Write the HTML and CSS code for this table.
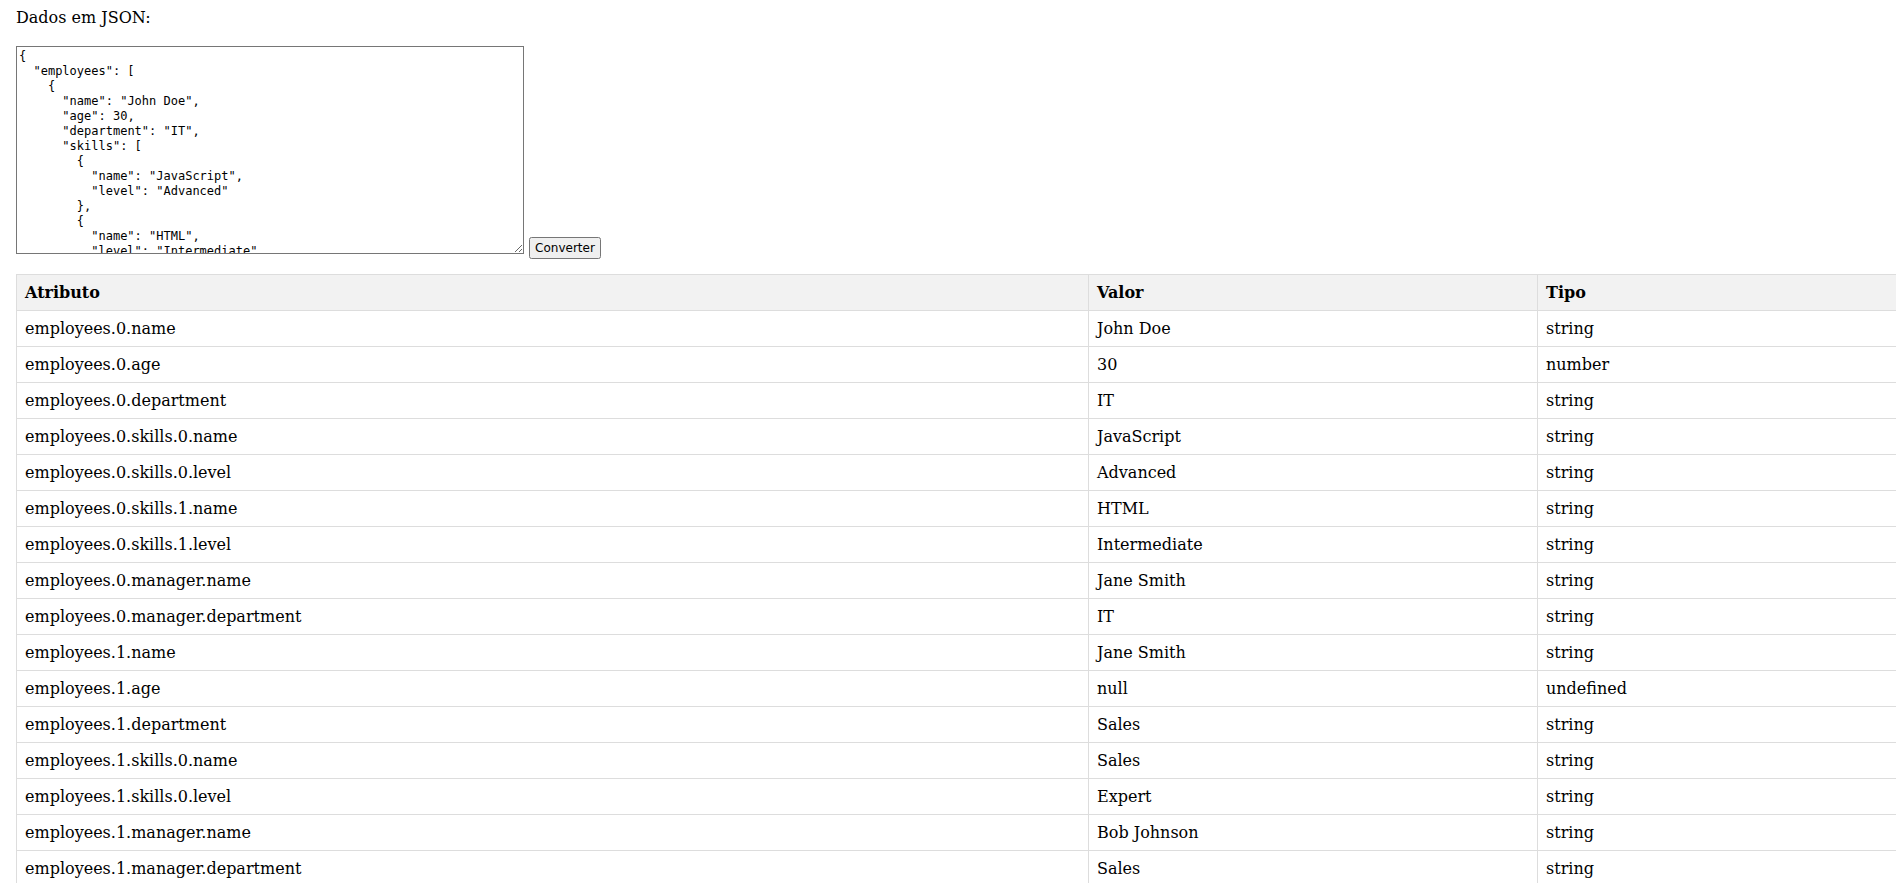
FILE: index.html
```html
<!DOCTYPE html>
<html lang="pt">
<head>
<meta charset="utf-8">
<title>JSON para Tabela</title>
<link rel="stylesheet" href="styles.css">
</head>
<body>
<label class="label" for="json">Dados em JSON:</label><br><br>
<textarea id="json" class="json-input" spellcheck="false">{
  "employees": [
    {
      "name": "John Doe",
      "age": 30,
      "department": "IT",
      "skills": [
        {
          "name": "JavaScript",
          "level": "Advanced"
        },
        {
          "name": "HTML",
          "level": "Intermediate"
        }
      ],
      "manager": {
        "name": "Jane Smith",
        "department": "IT"
      }
    },
    {
      "name": "Jane Smith",
      "age": null,
      "department": "Sales",
      "skills": [
        {
          "name": "Sales",
          "level": "Expert"
        }
      ],
      "manager": {
        "name": "Bob Johnson",
        "department": "Sales"
      }
    }
  ]
}</textarea>
<button class="convert-btn" type="button">Converter</button>
<table class="result">
<colgroup><col class="col-attr"><col class="col-val"><col class="col-type"></colgroup>
<thead>
<tr><th>Atributo</th><th>Valor</th><th>Tipo</th></tr>
</thead>
<tbody>
<tr><td>employees.0.name</td><td>John Doe</td><td>string</td></tr>
<tr><td>employees.0.age</td><td>30</td><td>number</td></tr>
<tr><td>employees.0.department</td><td>IT</td><td>string</td></tr>
<tr><td>employees.0.skills.0.name</td><td>JavaScript</td><td>string</td></tr>
<tr><td>employees.0.skills.0.level</td><td>Advanced</td><td>string</td></tr>
<tr><td>employees.0.skills.1.name</td><td>HTML</td><td>string</td></tr>
<tr><td>employees.0.skills.1.level</td><td>Intermediate</td><td>string</td></tr>
<tr><td>employees.0.manager.name</td><td>Jane Smith</td><td>string</td></tr>
<tr><td>employees.0.manager.department</td><td>IT</td><td>string</td></tr>
<tr><td>employees.1.name</td><td>Jane Smith</td><td>string</td></tr>
<tr><td>employees.1.age</td><td>null</td><td>undefined</td></tr>
<tr><td>employees.1.department</td><td>Sales</td><td>string</td></tr>
<tr><td>employees.1.skills.0.name</td><td>Sales</td><td>string</td></tr>
<tr><td>employees.1.skills.0.level</td><td>Expert</td><td>string</td></tr>
<tr><td>employees.1.manager.name</td><td>Bob Johnson</td><td>string</td></tr>
<tr><td>employees.1.manager.department</td><td>Sales</td><td>string</td></tr>
</tbody>
</table>
</body>
</html>
```
FILE: styles.css
```css
html {
  overflow: hidden;
}
body {
  margin: 8px 1px 0 16px;
  font-family: "DejaVu Serif", serif;
  font-size: 16px;
  color: #000;
  background: #fff;
}
.json-input {
  box-sizing: border-box;
  width: 508px;
  height: 208px;
  margin: 0;
  padding: 2px;
  border: 1px solid #767676;
  font-family: "DejaVu Sans Mono", monospace;
  font-size: 12px;
  line-height: 15px;
  color: #000;
  overflow: hidden;
}
.convert-btn {
  font-family: "DejaVu Sans", sans-serif;
  font-size: 12px;
  padding: 2px 4px;
  vertical-align: 2px;
}
.result {
  width: 100%;
  margin-top: 15px;
  border-collapse: collapse;
  table-layout: fixed;
}
.col-attr { width: 1072px; }
.col-val { width: 449px; }
.col-type { width: 359px; }
.result th,
.result td {
  border: 1px solid #dddddd;
  padding: 8px;
  text-align: left;
}
.result th {
  background: #f2f2f2;
  font-weight: bold;
}
```
